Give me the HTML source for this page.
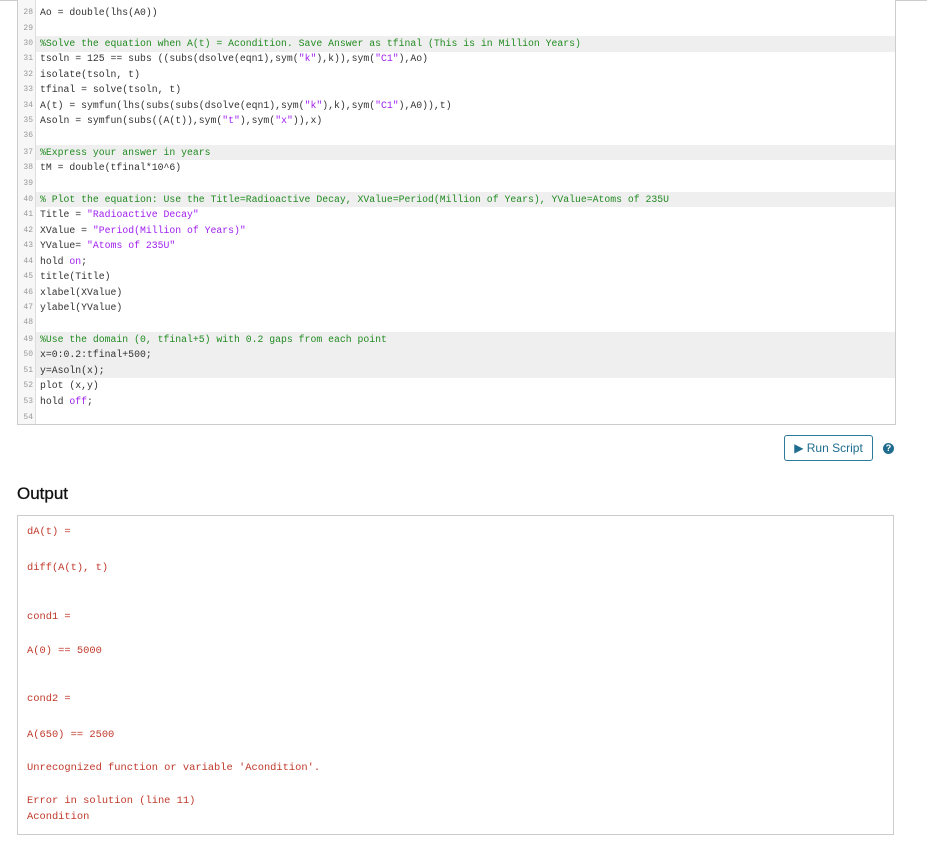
<!DOCTYPE html>
<html><head><meta charset="utf-8"><style>
body{margin:0;background:#fff;width:927px;height:853px;overflow:hidden;position:relative;font-family:"Liberation Sans",sans-serif}
.topline{position:absolute;left:0;top:0;width:927px;height:1px;background:#ccc}
.ed{position:absolute;left:17px;top:0;width:877px;height:424px;border:1px solid #ccc;border-top:none;background:#fff}
.gut{position:absolute;left:0;top:0;width:17px;height:424px;background:#f7f7f7;border-right:1px solid #ddd}
.l{position:absolute;left:0;width:877px;height:15.5px;line-height:15.5px;font-family:"Liberation Mono",monospace;font-size:9.8px;color:#333;white-space:pre}
.l.h .c{background:#efefef}
.n{position:absolute;left:0;width:15px;text-align:right;color:#999;font-size:8px}
.c{position:absolute;left:18px;right:0;padding-left:4px}
.g{color:#228b22}.s{color:#a020f0}
.btn{position:absolute;left:784px;top:435px;width:89px;height:26px;box-sizing:border-box;border:1px solid #2a7a9c;border-radius:3px;color:#1f6c8f;font-size:12px;line-height:24px;text-align:center}
.q{position:absolute;left:883px;top:443px;width:11px;height:11px;border-radius:50%;background:#1f6c8f;color:#fff;font-size:9px;font-weight:bold;line-height:11px;text-align:center}
h2{position:absolute;left:17px;top:484px;margin:0;font-size:17px;font-weight:normal;color:#111;-webkit-text-stroke:0.3px #111}
.out{position:absolute;left:17px;top:515px;width:877px;height:320px;border:1px solid #ccc;box-sizing:border-box}
.o{position:absolute;left:27px;font-family:"Liberation Mono",monospace;font-size:10.4px;color:#c0392b;line-height:12px;white-space:pre}
</style></head><body>
<div class="topline"></div>
<div class="ed"><div class="gut"></div>
<div class="l" style="top:5px"><span class="n">28</span><span class="c">Ao = double(lhs(A0))</span></div>
<div class="l" style="top:20.5px"><span class="n">29</span><span class="c"> </span></div>
<div class="l h" style="top:36px"><span class="n">30</span><span class="c g">%Solve the equation when A(t) = Acondition. Save Answer as tfinal (This is in Million Years)</span></div>
<div class="l" style="top:51px"><span class="n">31</span><span class="c">tsoln = 125 == subs ((subs(dsolve(eqn1),sym(<span class="s">"k"</span>),k)),sym(<span class="s">"C1"</span>),Ao)</span></div>
<div class="l" style="top:66.5px"><span class="n">32</span><span class="c">isolate(tsoln, t)</span></div>
<div class="l" style="top:82px"><span class="n">33</span><span class="c">tfinal = solve(tsoln, t)</span></div>
<div class="l" style="top:97.5px"><span class="n">34</span><span class="c">A(t) = symfun(lhs(subs(subs(dsolve(eqn1),sym(<span class="s">"k"</span>),k),sym(<span class="s">"C1"</span>),A0)),t)</span></div>
<div class="l" style="top:113px"><span class="n">35</span><span class="c">Asoln = symfun(subs((A(t)),sym(<span class="s">"t"</span>),sym(<span class="s">"x"</span>)),x)</span></div>
<div class="l" style="top:128px"><span class="n">36</span><span class="c"> </span></div>
<div class="l h" style="top:144.5px"><span class="n">37</span><span class="c g">%Express your answer in years</span></div>
<div class="l" style="top:160px"><span class="n">38</span><span class="c">tM = double(tfinal*10^6)</span></div>
<div class="l" style="top:175.5px"><span class="n">39</span><span class="c"> </span></div>
<div class="l h" style="top:191.5px"><span class="n">40</span><span class="c g">% Plot the equation: Use the Title=Radioactive Decay, XValue=Period(Million of Years), YValue=Atoms of 235U</span></div>
<div class="l" style="top:207px"><span class="n">41</span><span class="c">Title = <span class="s">"Radioactive Decay"</span></span></div>
<div class="l" style="top:222.5px"><span class="n">42</span><span class="c">XValue = <span class="s">"Period(Million of Years)"</span></span></div>
<div class="l" style="top:238px"><span class="n">43</span><span class="c">YValue= <span class="s">"Atoms of 235U"</span></span></div>
<div class="l" style="top:253.5px"><span class="n">44</span><span class="c">hold <span class="s">on</span>;</span></div>
<div class="l" style="top:269px"><span class="n">45</span><span class="c">title(Title)</span></div>
<div class="l" style="top:284.5px"><span class="n">46</span><span class="c">xlabel(XValue)</span></div>
<div class="l" style="top:300px"><span class="n">47</span><span class="c">ylabel(YValue)</span></div>
<div class="l" style="top:315px"><span class="n">48</span><span class="c"> </span></div>
<div class="l h" style="top:331.5px"><span class="n">49</span><span class="c g">%Use the domain (0, tfinal+5) with 0.2 gaps from each point</span></div>
<div class="l h" style="top:347px"><span class="n">50</span><span class="c">x=0:0.2:tfinal+500;</span></div>
<div class="l h" style="top:362.5px"><span class="n">51</span><span class="c">y=Asoln(x);</span></div>
<div class="l" style="top:378px"><span class="n">52</span><span class="c">plot (x,y)</span></div>
<div class="l" style="top:393.5px"><span class="n">53</span><span class="c">hold <span class="s">off</span>;</span></div>
<div class="l" style="top:409.5px"><span class="n">54</span><span class="c"> </span></div>
</div>
<div class="btn">&#9654; Run Script</div>
<div class="q">?</div>
<h2>Output</h2>
<div class="out"></div>
<div class="o" style="top:526px">dA(t) =</div>
<div class="o" style="top:562px">diff(A(t), t)</div>
<div class="o" style="top:611px">cond1 =</div>
<div class="o" style="top:645px">A(0) == 5000</div>
<div class="o" style="top:693px">cond2 =</div>
<div class="o" style="top:729px">A(650) == 2500</div>
<div class="o" style="top:762px">Unrecognized function or variable 'Acondition'.</div>
<div class="o" style="top:795px">Error in solution (line 11)</div>
<div class="o" style="top:811px">Acondition</div>
</body></html>
